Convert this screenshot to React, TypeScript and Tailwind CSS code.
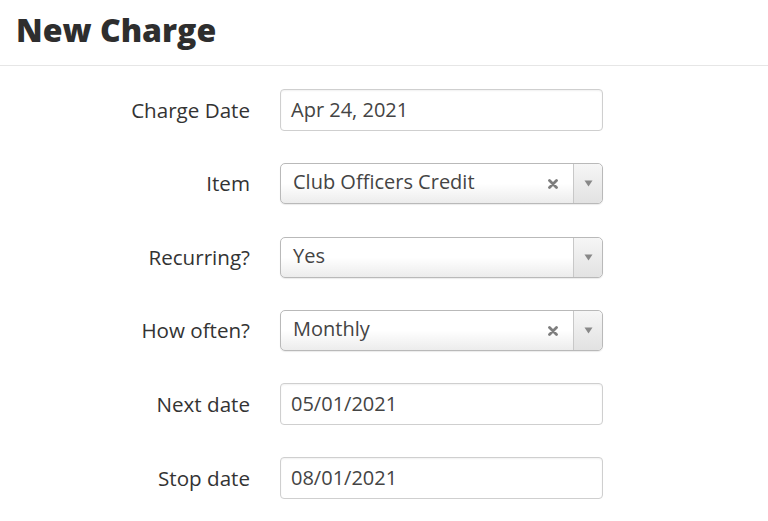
const FONT = { fontFamily: '"Open Sans", "Liberation Sans", sans-serif' };

function Caret() {
  return (
    <div className="flex h-full w-[29px] items-center justify-center border-l border-[#c8c8c8] bg-gradient-to-b from-[#f6f6f6] to-[#e2e2e2] rounded-r-[5px]">
      <svg width="9" height="7" viewBox="0 0 9 7">
        <path d="M0.5 0.5h8L4.5 6.5z" fill="#888" />
      </svg>
    </div>
  );
}

function Clear() {
  return (
    <svg width="10" height="10" viewBox="0 0 10 10" className="mr-[15px]">
      <path d="M1.5 1.5l7 7M8.5 1.5l-7 7" stroke="#7e7e7e" strokeWidth="2.8" strokeLinecap="round" />
    </svg>
  );
}

function TextInput({ value }: { value: string }) {
  return (
    <div className="flex h-[42px] w-[323px] items-center rounded-[4px] border border-[#cfcfcf] bg-white px-[10px] text-[20px] text-[#444] shadow-[inset_0_1px_2px_rgba(0,0,0,0.06)]">
      {value}
    </div>
  );
}

function Select({ value, clearable }: { value: string; clearable?: boolean }) {
  return (
    <div className="flex h-[41px] w-[323px] items-center rounded-[5px] border border-[#b9b9b9] bg-gradient-to-b from-white via-white to-[#ececec] text-[20px] text-[#444] shadow-[0_1px_1px_rgba(0,0,0,0.08)]">
      <span className="flex-1 pl-[12px] pb-[3px]">{value}</span>
      {clearable && <Clear />}
      <Caret />
    </div>
  );
}

const ROWS: { label: string; kind: "text" | "select"; value: string; clearable?: boolean }[] = [
  { label: "Charge Date", kind: "text", value: "Apr 24, 2021" },
  { label: "Item", kind: "select", value: "Club Officers Credit", clearable: true },
  { label: "Recurring?", kind: "select", value: "Yes" },
  { label: "How often?", kind: "select", value: "Monthly", clearable: true },
  { label: "Next date", kind: "text", value: "05/01/2021" },
  { label: "Stop date", kind: "text", value: "08/01/2021" },
];

export default function App() {
  return (
    <div className="h-[521px] w-[768px] overflow-hidden bg-white" style={FONT}>
      {/* header */}
      <div className="h-[66px] border-b border-[#e6e6e6] px-[16px] pt-[8px]">
        <h1 className="text-[32px] font-extrabold leading-[44px] text-[#2e2e2e]">New Charge</h1>
      </div>

      {/* form */}
      <div className="flex flex-col gap-[31.6px] pt-[23px]">
        {ROWS.map((r) => (
          <div key={r.label} className="flex h-[42px] items-center">
            <label className="w-[250px] text-right text-[20.6px] text-[#333]">{r.label}</label>
            <div className="ml-[30px]">
              {r.kind === "text" ? (
                <TextInput value={r.value} />
              ) : (
                <Select value={r.value} clearable={r.clearable} />
              )}
            </div>
          </div>
        ))}
      </div>
    </div>
  );
}
